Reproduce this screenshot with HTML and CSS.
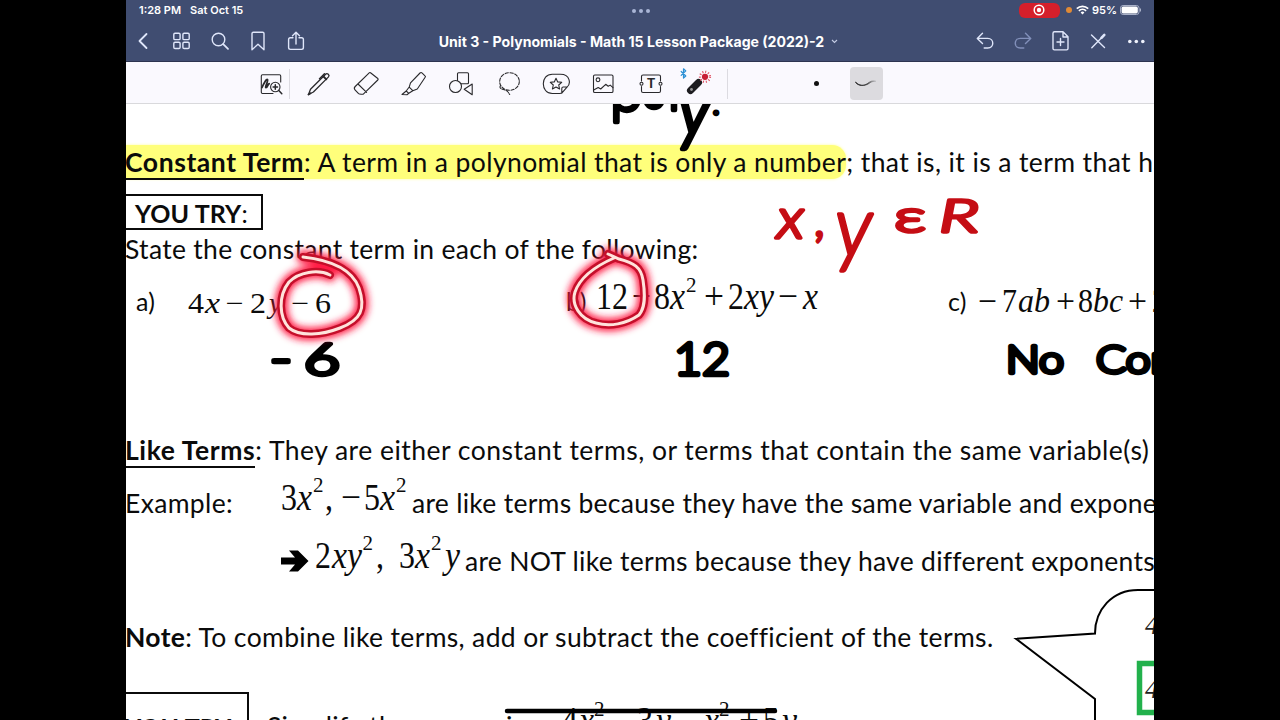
FILE: index.html
```html
<!DOCTYPE html>
<html lang="en">
<head>
  <meta charset="UTF-8">
  <title>Unit 3 - Polynomials</title>
  <meta name="viewport" content="width=device-width, initial-scale=1.0">
  <link rel="stylesheet" href="styles.css">
</head>
<body>
  <div class="tablet">
    <!-- Header: status bar and navigation -->
    <header class="header">
      <div class="status">
        <div class="status-left"><span class="clock">1:28 PM</span><span class="date">Sat Oct 15</span></div>
        <div class="multitask"><i></i><i></i><i></i></div>
        <div class="status-right">
          <span class="record"><svg width="14" height="14" viewBox="0 0 14 14"><circle cx="7" cy="7" r="4.8" fill="none" stroke="#fff" stroke-width="1.5"/><circle cx="7" cy="7" r="2.2" fill="#fff"/></svg></span>
          <span class="mic-dot"></span>
          <svg class="wifi" width="13" height="10" viewBox="0 0 13 10" fill="none" stroke="#fff" stroke-width="1.7"><path d="M.8 3.6a8.2 8.2 0 0 1 11.4 0M2.9 5.8a5.2 5.2 0 0 1 7.2 0"/><path d="M4.6 7.4a2.8 2.8 0 0 1 3.8 0L6.5 9.5z" fill="#fff" stroke="none"/></svg>
          <span class="percent">95%</span>
          <svg width="22" height="10" viewBox="0 0 22 10"><rect x=".5" y=".5" width="18.6" height="9" rx="2.6" fill="none" stroke="#a9b1c8"/><rect x="1.6" y="1.6" width="16.2" height="6.8" rx="1.6" fill="#fff"/><path d="M20.4 3.4v3.2" stroke="#a9b1c8" stroke-width="1.2"/></svg>
        </div>
      </div>
      <div class="navbar">
        <div class="nav-group nav-left">
          <svg viewBox="0 0 24 24"><path d="M15.5 5 8.5 12l7 7" stroke-width="1.8"/></svg>
          <svg viewBox="0 0 24 24"><rect x="4.8" y="4.3" width="6.3" height="6.3" rx="1.2"/><rect x="13.9" y="4.3" width="6.3" height="6.3" rx="1.2"/><rect x="4.8" y="13.2" width="6.3" height="6.3" rx="1.2"/><rect x="13.9" y="13.2" width="6.3" height="6.3" rx="1.2"/></svg>
          <svg viewBox="0 0 24 24"><circle cx="10.5" cy="10.5" r="6.3"/><path d="m15.2 15.2 4.8 4.6" stroke-width="1.8"/></svg>
          <svg viewBox="0 0 24 24"><path d="M6 4.6c0-.9.5-1.4 1.4-1.4h9.2c.9 0 1.4.5 1.4 1.4v16.1l-6-5.4-6 5.4z"/></svg>
          <svg viewBox="0 0 24 24"><path d="M9 8.8H6.4c-1.1 0-1.8.7-1.8 1.8v8c0 1.1.7 1.8 1.8 1.8h11.2c1.1 0 1.8-.7 1.8-1.8v-8c0-1.1-.7-1.8-1.8-1.8H15M12 15V3.6M8.5 6.8 12 3.3l3.5 3.5"/></svg>
        </div>
        <div class="doc-title">Unit 3 - Polynomials - Math 15 Lesson Package (2022)-2<svg width="7" height="5" viewBox="0 0 7 5"><path d="m1 1 2.5 2.5L6 1" fill="none" stroke="#c4cce4" stroke-width="1.1"/></svg></div>
        <div class="nav-group nav-right">
          <svg viewBox="0 0 24 24"><path d="M9.5 4.3 4.3 9.4l5.2 5M4.500 9.400h10.300c6.600 0 6.600 9.600 0 9.600h-3.600"/></svg>
          <svg viewBox="0 0 24 24" class="disabled"><path d="m14.500 4.300 5.200 5.100-5.200 5M19.500 9.400H9.200c-6.600 0-6.600 9.600 0 9.600h3.600"/></svg>
          <svg viewBox="0 0 24 24"><path d="M6.500 2.800h8.500l5 5v11.700c0 .9-.5 1.400-1.400 1.400H6.400c-.9 0-1.400-.5-1.400-1.400V4.200c0-.9.5-1.400 1.500-1.400zM15 3v5h4.800M12.500 9.500v7M9 13h7"/></svg>
          <svg viewBox="0 0 24 24"><path d="m5.500 6 13 12.500M5.800 18.800 16 8.300"/><path d="m15.500 8.800 2.800-2.900" stroke-width="2.600"/></svg>
          <svg viewBox="0 0 24 24"><g fill="#eef1fb" stroke="none"><circle cx="5.800" cy="12.500" r="1.800"/><circle cx="12.300" cy="12.500" r="1.800"/><circle cx="18.800" cy="12.500" r="1.800"/></g></svg>
        </div>
      </div>
    </header>

    <!-- Drawing tools -->
    <div class="toolbar">
      <svg class="zoom-tool" viewBox="0 0 28 28"><path d="M16 23.500H5.500c-.8 0-1.200-.4-1.200-1.200V6c0-.8.4-1.200 1.200-1.200h17c.8 0 1.200.4 1.200 1.200v6"/><path d="M5 17.500c2-4.500 4.500-9 5.500-7.800s-3 8-1.500 8 1.800-3.500 3.200-4" stroke-width="1.800"/><circle cx="18.300" cy="17" r="4.700" fill="#faf9fe"/><path d="M18.300 14.800v4.400M16.100 17h4.400M21.800 20.500l3 3.200" stroke-width="1.500"/></svg>
      <span class="rule"></span>
      <div class="tools">
        <svg viewBox="0 0 28 28"><path d="m3.500 24.500 2-5.200L20.600 4.200c1.700-1.700 4.500.9 2.900 2.700L8.400 22z" stroke-width="1.300"/><path d="m18.500 6.500 2.800 2.800M3.500 24.500l2-1.300" stroke-width="1.900"/><path d="m19.500 3.800-5 5" stroke-width="1.500"/></svg>
        <svg viewBox="0 0 28 28"><path d="M17.200 2.800 3.200 16.500c-1.200 1.200-1.200 2.200-.2 3.300l3.600 3.800c.6.6 1.300.6 2.500.6h2.200L25.800 10c.5-.5.5-1 0-1.500L18.500 2.800c-.5-.4-.9-.4-1.300 0zM6 14l8.600 8.300"/></svg>
        <svg viewBox="0 0 28 28"><path d="m20 3-9.500 9.800-1.300 4.400 3.600 3.500 4.500-1.700L25 7.500c.6-.7.6-1.200 0-1.700l-2.800-2.700c-.8-.8-1.500-.8-2.200-.1zM9.200 17l-3 4 2.600 2.300 4-2.600M6.200 21l-4.200 3.500 5 .2 1.800-1.400"/></svg>
        <svg viewBox="0 0 28 28"><rect x="10.500" y="2.800" width="11" height="11" rx="1"/><circle cx="8.500" cy="16.500" r="6" fill="#faf9fe"/><path d="m17.200 19.200 8-5.200v10.800z" fill="#faf9fe"/></svg>
        <svg viewBox="0 0 28 28"><ellipse cx="14.500" cy="11.500" rx="9.800" ry="8.800" stroke-dasharray="3.200 1.700"/><path d="M5.500 15.500c-2.500 4.500 5 3 7.500 6.500.8 1 1 1.700 1.700 2.500" stroke-dasharray="3.200 1.300"/></svg>
        <svg viewBox="0 0 28 28"><path d="M10.300 4.200h8.200c10 0 10.500 10 6.300 13.200l-4.600 5.200c-.8.8-1.500.9-2.500.9h-7.400c-12 0-12-19.300 0-19.300zM19.800 23.200v-4.800c0-.9.5-1.400 1.400-1.400h4"/><path d="m14 8.200 1.700 3.700 4 .4-3 2.700.9 4-3.600-2-3.600 2 .9-4-3-2.700 4-.4z"/></svg>
        <svg viewBox="0 0 28 28"><rect x="4.500" y="5" width="19.500" height="17.500" rx="1.300"/><circle cx="9" cy="9.800" r="1.900"/><path d="m4.700 20 4.500-2.500 2.500 1.500 5-4.700 2.500 2 2-1.200 2.800 2.500"/></svg>
        <svg viewBox="0 0 28 28"><path d="M4.500 11V6.500C4.500 5.500 5 5 6 5h16c1 0 1.500.5 1.500 1.500V11M4.500 16.500V21c0 1 .5 1.500 1.500 1.500h16c1 0 1.500-.5 1.500-1.500v-4.500"/><circle cx="4.500" cy="13.800" r="1.500"/><circle cx="23.500" cy="13.800" r="1.500"/><text x="14" y="18.400" text-anchor="middle">T</text></svg>
        <svg class="laser" viewBox="0 0 28 28"><path d="M-2.800 1.500 1.800 6-.5 8V-1.200L1.800.9l-4.600 4.500" stroke="#2a8fd4" stroke-width="1.200"/><path d="m6.500 20.500 8-8" stroke="#1d1d20" stroke-width="7"/><circle cx="7.500" cy="19.500" r="1.400" fill="#999" stroke="none"/><circle cx="21" cy="6.800" r="5" stroke="#e04a5c" stroke-width="2.200" stroke-dasharray="1 1.900" stroke-linecap="butt"/><circle cx="21" cy="6.800" r="3.100" fill="#c81e35" stroke="none"/></svg>
      </div>
      <span class="rule rule-end"></span>
      <span class="pen-size"></span>
      <span class="pen-style"><svg viewBox="0 0 33 33"><defs><linearGradient id="fade"><stop offset="0" stop-color="#111"/><stop offset=".6" stop-color="#444"/><stop offset="1" stop-color="#c4c4c8"/></linearGradient></defs><path d="M5.500 15c3 3.500 8 4.500 12 1.500 3-2.200 5-3.200 8.500-2.200-5-.3-6 2-9 3.200-5 2-10 .6-11.500-2.500z" fill="url(#fade)" stroke="url(#fade)" stroke-width=".8"/></svg></span>
    </div>

    <!-- Lesson page -->
    <main class="page">
      <p class="line definition"><mark><b class="term">Constant Term</b>: A term in a polynomial that is only a number</mark>; that is, it is a term that has</p>
      <div class="try-box"><b>YOU TRY</b>:</div>
      <p class="line state">State the constant term in each of the following:</p>

      <div class="questions">
        <span class="letter letter-a">a)</span>
        <svg class="math math-a" viewBox="188 266 150 70">
          <g class="m30"><text x="188" y="313" textLength="16" lengthAdjust="spacingAndGlyphs">4</text><text x="205" y="313" class="v" textLength="15" lengthAdjust="spacingAndGlyphs">x</text><text x="225.500" y="313" textLength="18" lengthAdjust="spacingAndGlyphs">−</text><text x="250" y="313" textLength="16" lengthAdjust="spacingAndGlyphs">2</text><text x="269" y="313" class="v">y</text><text x="291" y="313" textLength="18" lengthAdjust="spacingAndGlyphs">−</text><text x="315" y="313" textLength="16" lengthAdjust="spacingAndGlyphs">6</text></g>
        </svg>
        <span class="letter letter-b">b)</span>
        <svg class="math math-b" viewBox="598 266 222 70">
          <g class="m38">
            <text x="596" y="309" textLength="32" lengthAdjust="spacingAndGlyphs">12</text><text x="632" y="309" textLength="19" lengthAdjust="spacingAndGlyphs">+</text><text x="654" y="309" textLength="16" lengthAdjust="spacingAndGlyphs">8</text><text x="670" y="309" class="v" textLength="15" lengthAdjust="spacingAndGlyphs">x</text><text x="686" y="292" class="sup">2</text><text x="704" y="309" textLength="20" lengthAdjust="spacingAndGlyphs">+</text><text x="728" y="309" textLength="16" lengthAdjust="spacingAndGlyphs">2</text><text x="744" y="309" class="v" textLength="30" lengthAdjust="spacingAndGlyphs">xy</text><text x="778" y="309" textLength="20" lengthAdjust="spacingAndGlyphs">−</text><text x="803" y="309" class="v" textLength="15" lengthAdjust="spacingAndGlyphs">x</text>
          </g>
        </svg>
        <span class="letter letter-c">c)</span>
        <svg class="math math-c" viewBox="978 266 190 70">
          <g class="m33">
            <text x="978" y="311.500" textLength="19" lengthAdjust="spacingAndGlyphs">−</text><text x="1002" y="311.500" textLength="15" lengthAdjust="spacingAndGlyphs">7</text><text x="1018" y="311.500" class="v" textLength="32" lengthAdjust="spacingAndGlyphs">ab</text><text x="1056" y="311.500" textLength="19" lengthAdjust="spacingAndGlyphs">+</text><text x="1078" y="311.500" textLength="15" lengthAdjust="spacingAndGlyphs">8</text><text x="1093" y="311.500" class="v" textLength="30" lengthAdjust="spacingAndGlyphs">bc</text><text x="1128" y="311.500" textLength="19" lengthAdjust="spacingAndGlyphs">+</text><text x="1152" y="311.500" textLength="15" lengthAdjust="spacingAndGlyphs">2</text>
          </g>
        </svg>
      </div>

      <p class="line like"><b class="term">Like Terms</b>: They are either constant terms, or terms that contain the same variable(s)</p>
      <div class="line example">
        <span class="label">Example:</span>
        <svg class="math math-d" viewBox="281 476 126 50">
          <g class="m38">
            <text x="281" y="510" textLength="16" lengthAdjust="spacingAndGlyphs">3</text><text x="297" y="510" class="v" textLength="15" lengthAdjust="spacingAndGlyphs">x</text><text x="313" y="492" class="sup">2</text><text x="325" y="510" textLength="8" lengthAdjust="spacingAndGlyphs">,</text><text x="341" y="510" textLength="20" lengthAdjust="spacingAndGlyphs">−</text><text x="364" y="510" textLength="16" lengthAdjust="spacingAndGlyphs">5</text><text x="380" y="510" class="v" textLength="15" lengthAdjust="spacingAndGlyphs">x</text><text x="396" y="492" class="sup">2</text>
          </g>
        </svg>
        <span class="reason same">are like terms because they have the same variable and exponent</span>
      </div>
      <div class="line example second">
        <svg class="arrow" width="28" height="22" viewBox="0 0 28 22"><path d="M0 7.500h14L8 .5h9L27.500 11 17 21.500H8l6-7H0z"/></svg>
        <svg class="math math-e" viewBox="315 534 146 50">
          <g class="m38">
            <text x="315" y="568" textLength="16" lengthAdjust="spacingAndGlyphs">2</text><text x="332" y="568" class="v" textLength="30" lengthAdjust="spacingAndGlyphs">xy</text><text x="362.500" y="550" class="sup">2</text><text x="376" y="568" textLength="8" lengthAdjust="spacingAndGlyphs">,</text><text x="399" y="568" textLength="16" lengthAdjust="spacingAndGlyphs">3</text><text x="415" y="568" class="v" textLength="15" lengthAdjust="spacingAndGlyphs">x</text><text x="431" y="550" class="sup">2</text><text x="445" y="568" class="v" textLength="15" lengthAdjust="spacingAndGlyphs">y</text>
          </g>
        </svg>
        <span class="reason different">are NOT like terms because they have different exponents</span>
      </div>
      <p class="line note"><b>Note</b>: To combine like terms, add or subtract the coefficient of the terms.</p>
      <div class="simplify">
        <div class="try-box"><b>YOU TRY</b>:</div>
        <span class="prompt">Simplify the expression:</span>
        <svg class="math math-f" viewBox="560 692 250 60">
          <g class="m38">
            <text x="561" y="733" textLength="17" lengthAdjust="spacingAndGlyphs">4</text><text x="579" y="733" class="v" textLength="15" lengthAdjust="spacingAndGlyphs">x</text><text x="594" y="716" class="sup">2</text><text x="611" y="734" textLength="17" lengthAdjust="spacingAndGlyphs">−</text><text x="637" y="733" textLength="16" lengthAdjust="spacingAndGlyphs">3</text><text x="656" y="733" class="v" textLength="15" lengthAdjust="spacingAndGlyphs">y</text><text x="680" y="734" textLength="17" lengthAdjust="spacingAndGlyphs">−</text><text x="704" y="733" class="v" textLength="15" lengthAdjust="spacingAndGlyphs">x</text><text x="719" y="716" class="sup">2</text><text x="739" y="733" textLength="20" lengthAdjust="spacingAndGlyphs">+</text><text x="763" y="733" textLength="16" lengthAdjust="spacingAndGlyphs">5</text><text x="782" y="733" class="v" textLength="15" lengthAdjust="spacingAndGlyphs">y</text>
          </g>
        </svg>
      </div>

      <!-- Pen ink, laser and shapes drawn over the page -->
      <svg class="ink" viewBox="126 104 1028 616">
        <defs><filter id="glow" x="-30%" y="-30%" width="160%" height="160%"><feGaussianBlur stdDeviation="3.500"/></filter></defs>
        <g class="pen">
          <text x="610" y="111" font-size="66" textLength="33" lengthAdjust="spacingAndGlyphs">p</text>
          <text x="641" y="108" font-size="60" textLength="26" lengthAdjust="spacingAndGlyphs">o</text>
          <text x="668" y="110" font-size="60" textLength="12" lengthAdjust="spacingAndGlyphs">l</text>
          <text x="676" y="134" font-size="84" class="slant" textLength="38" lengthAdjust="spacingAndGlyphs">y</text>
          <text x="713" y="114" font-size="26">.</text>
          <text x="270" y="375" font-size="46" textLength="22" lengthAdjust="spacingAndGlyphs">-</text>
          <text x="304" y="375" font-size="43" textLength="36" lengthAdjust="spacingAndGlyphs">6</text>
          <text x="674" y="375" font-size="45" textLength="56" lengthAdjust="spacingAndGlyphs">12</text>
          <text x="1006" y="373" font-size="38" textLength="58" lengthAdjust="spacingAndGlyphs">No</text>
          <text x="1096" y="373" font-size="38" textLength="79" lengthAdjust="spacingAndGlyphs">Con</text>
        </g>
        <g class="pen red">
          <text x="777" y="238" font-size="56" class="slant" textLength="27" lengthAdjust="spacingAndGlyphs">x</text>
          <text x="814" y="236" font-size="48">,</text>
          <text x="835" y="256" font-size="84" class="slant" textLength="37" lengthAdjust="spacingAndGlyphs">y</text>
          <text x="894" y="232" font-size="46" textLength="32" lengthAdjust="spacingAndGlyphs">ε</text>
          <text x="939" y="232" font-size="46" class="slant" textLength="40" lengthAdjust="spacingAndGlyphs">R</text>
        </g>
        <g class="beam">
          <path id="ring-a" d="M303 257C330 260 352 269 359 288C366 309 361 320 340 328C322 335 300 337 289 328C279 317 278 296 289 282C299 272 318 269 330 275"/>
          <path id="ring-b" d="M608 254L619 259C634 263 641 267 643 280C646 300 644 309 639 315C626 324 610 327 596 323C580 319 571 305 575 292C581 275 598 265 614 258"/>
        </g>
        <g class="edge"><use href="#ring-a"/><use href="#ring-b"/></g>
        <g class="core"><use href="#ring-a"/><use href="#ring-b"/></g>
        <path class="bubble" d="M1160 590H1138C1112 590 1095 610 1095 633.500L1016 638.800 1095 699V730"/>
        <g class="side"><text x="1145" y="634">4</text><text x="1145" y="698">4</text></g>
        <path class="green" d="M1160 663.500H1139.500V712.500H1160"/>
        <path class="strike" d="M507 711H775"/>
      </svg>
    </main>
  </div>
</body>
</html>
```
FILE: styles.css
```css
/* ====== RESET ====== */
* {
  margin: 0;
  padding: 0;
  box-sizing: border-box;
}

body {
  background: #000;
  height: 720px;
  overflow: hidden;
}

.tablet {
  width: 1028px;
  height: 720px;
  margin: 0 auto;
  display: flex;
  flex-direction: column;
  background: #fff;
  overflow: hidden;
}

/* ====== HEADER ====== */
.header {
  height: 62px;
  flex: none;
  background: #404d71;
  border-bottom: 1px solid #2c3450;
  color: #fff;
  font-family: Inter, sans-serif;
}
.status {
  height: 20px;
  display: grid;
  grid-template-columns: 1fr auto 1fr;
  align-items: center;
  padding: 0 12px 0 13px;
  font-size: 11px;
  font-weight: 600;
}
.status-left {
  display: flex;
  gap: 9px;
}
.multitask {
  display: flex;
  gap: 3px;
  padding-top: 2px;
}
.multitask i {
  width: 4px;
  height: 4px;
  border-radius: 50%;
  background: #a9b5d6;
}
.status-right {
  display: flex;
  align-items: center;
  justify-content: flex-end;
}
.record {
  width: 41px;
  height: 15px;
  border-radius: 6px;
  background: #d51f2b;
  display: flex;
  align-items: center;
  justify-content: center;
}
.mic-dot {
  width: 6px;
  height: 6px;
  border-radius: 50%;
  background: #e08a35;
  margin: 0 4px 0 6px;
}
.percent {
  margin: 0 3px;
}
.navbar {
  height: 42px;
  display: grid;
  grid-template-columns: 1fr auto 1fr;
  align-items: center;
}
.nav-group {
  display: flex;
}
.nav-group svg {
  width: 24px;
  height: 24px;
  fill: none;
  stroke: #dfe6fa;
  stroke-width: 1.4;
  stroke-linecap: round;
  stroke-linejoin: round;
}
.nav-left {
  padding-left: 5px;
  gap: 14.3px;
}
.nav-right {
  justify-content: flex-end;
  padding-right: 6px;
  gap: 13.8px;
}
.nav-group .disabled {
  stroke: #8290ba;
}
.doc-title {
  display: flex;
  align-items: center;
  gap: 7px;
  padding-right: 3px;
  font-size: 14.1px;
  font-weight: 700;
  white-space: nowrap;
}

/* ====== TOOLBAR ====== */
.toolbar {
  height: 42px;
  flex: none;
  display: flex;
  align-items: center;
  background: #faf9fe;
  border-bottom: 1px solid #d9d9dc;
  padding: 2px 0 0 131px;
}
.toolbar > svg,
.tools svg {
  width: 28px;
  height: 28px;
  fill: none;
  stroke: #29292c;
  stroke-width: 1.1;
  stroke-linecap: round;
  stroke-linejoin: round;
}
.tools {
  display: flex;
  gap: 19.4px;
}
.tools text {
  font: 700 13px Inter, sans-serif;
  fill: #29292c;
  stroke: none;
}
.tools .laser {
  overflow: visible;
}
.rule {
  width: 1px;
  height: 30px;
  background: #dcdbe1;
  margin: 0 15px 0 4px;
}
.rule-end {
  margin: 0 86px 0 15px;
}
.pen-size {
  width: 5px;
  height: 5px;
  border-radius: 50%;
  background: #111;
}
.pen-style {
  width: 33px;
  height: 33px;
  margin-left: 31px;
  border-radius: 4px;
  background: #dcdbdf;
}

/* ====== LESSON PAGE ====== */
.page {
  position: relative;
  flex: 1;
  padding-top: 41px;
  overflow: hidden;
  font-family: Lato, sans-serif;
  font-size: 26.5px;
  letter-spacing: 0.35px;
  line-height: 34px;
  color: #0b0b0b;
  white-space: nowrap;
}
.line {
  height: 34px;
  margin-left: -1px;
}
.term {
  border-bottom: 2px solid #0b0b0b;
}
.definition {
  letter-spacing: 0.4px;
}
.definition .term {
  letter-spacing: 0.58px;
}
mark {
  display: inline-block;
  height: 34px;
  color: inherit;
  background: #ffff7b;
  border-radius: 0 14px 14px 0;
  box-shadow: 0 0 3px #ffff9c;
}
.try-box {
  width: 137px;
  height: 36px;
  margin-top: 15px;
  border: 2px solid #0b0b0b;
  border-left: 0;
  padding-left: 9px;
  font-size: 25px;
  line-height: 35px;
  letter-spacing: 0.1px;
}
.state {
  margin-top: 2px;
  letter-spacing: 0.3px;
}

/* ====== QUESTIONS ====== */
.questions {
  display: flex;
  height: 70px;
}
.letter {
  padding: 18px 0 0 10px;
  flex: none;
  font-size: 25px;
}
.letter-a { width: 62px; }
.letter-b { width: 260px; padding-left: 228px; }
.letter-c { width: 158px; padding-left: 128px; }
.math {
  flex: none;
  overflow: visible;
  font-family: "Liberation Serif", serif;
  letter-spacing: 0;
  fill: #0b0b0b;
}
.math-a { width: 150px; height: 70px; }
.math-b { width: 222px; height: 70px; }
.math-c { width: 190px; height: 70px; }
.math-d { width: 126px; height: 50px; }
.math-e { width: 146px; height: 50px; }
.math-f { width: 250px; height: 60px; }
.m30 { font-size: 29px; }
.m33 { font-size: 33px; }
.m38 { font-size: 38px; }
.v { font-style: italic; }
.sup { font-size: 21px; }

.like {
  margin-top: 97px;
  letter-spacing: 0.48px;
}
.like .term {
  letter-spacing: 0.6px;
}
.example {
  display: flex;
  height: 50px;
  margin-top: 9px;
}
.label {
  flex: none;
  width: 156px;
  padding-top: 10px;
}
.reason {
  padding: 10px 0 0 5px;
  letter-spacing: 0.28px;
}
.second {
  margin-top: 8px;
  padding-left: 156px;
}
.arrow {
  flex: none;
  margin: 16px 6px 0 0;
}
.second .reason {
  padding-left: 4px;
}
.note {
  margin-top: 36px;
}
.simplify {
  display: flex;
  margin-top: 38px;
}
.simplify .try-box {
  width: 123px;
  height: 60px;
  margin: 0;
  padding: 16px 0 0;
  text-indent: -1px;
}
.prompt {
  width: 293px;
  padding: 17px 0 0;
  margin-left: 18px;
}

/* ====== INK LAYER ====== */
.ink {
  position: absolute;
  inset: 0;
  width: 1028px;
  height: 616px;
  fill: none;
  letter-spacing: 0;
}
.pen {
  font-family: Lato, sans-serif;
  font-weight: 300;
  fill: #000;
  stroke: #000;
  stroke-width: 4.4;
  stroke-linejoin: round;
}
.red {
  fill: #c50d14;
  stroke: #c50d14;
  stroke-width: 3.4;
}
.slant {
  font-style: italic;
}
.beam {
  stroke: #ff1f45;
  stroke-width: 13;
  stroke-linecap: round;
  filter: url(#glow);
}
.edge {
  stroke: #c40f2a;
  stroke-width: 8;
  stroke-linecap: round;
  stroke-linejoin: round;
}
.core {
  stroke: #ffe3dc;
  stroke-width: 3;
  stroke-linecap: round;
}
.bubble {
  stroke: #000;
  stroke-width: 2;
}
.side {
  font: italic 27px "Liberation Serif", serif;
  fill: #222;
}
.green {
  stroke: #22b14c;
  stroke-width: 5.5;
}
.strike {
  stroke: #000;
  stroke-width: 4.5;
  stroke-linecap: round;
}
```
